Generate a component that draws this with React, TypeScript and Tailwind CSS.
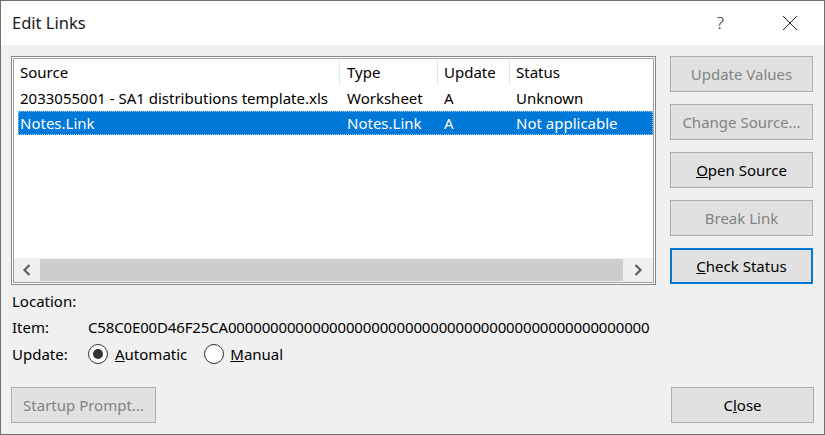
import React from "react";

const font = { fontFamily: '"Segoe UI", "Noto Sans", "Open Sans", sans-serif' };

function Btn({ children, disabled, focused, className = "" }: { children: React.ReactNode; disabled?: boolean; focused?: boolean; className?: string }) {
  return (
    <div
      className={
        "flex items-center justify-center bg-[#e1e1e1] text-[15px] " +
        (focused ? "border-2 border-[#0078d7] " : "border border-[#adadad] ") +
        (disabled ? "text-[#838383] " : "text-black ") +
        className
      }
    >
      {children}
    </div>
  );
}

function Radio({ checked }: { checked?: boolean }) {
  return (
    <div className="w-[20px] h-[20px] rounded-full border border-[#333333] bg-white flex items-center justify-center shrink-0">
      {checked && <div className="w-[10px] h-[10px] rounded-full bg-[#333333]" />}
    </div>
  );
}

export default function App() {
  const zeros = "0".repeat(50);
  return (
    <div className="w-[825px] h-[435px] bg-[#f0f0f0] border border-[#707070] flex flex-col overflow-hidden text-black" style={font}>
      {/* Title bar */}
      <div className="h-[44px] bg-white flex items-center shrink-0">
        <span className="ml-[11px] text-[16.5px] text-[#1a1a1a]">Edit Links</span>
        <span className="ml-auto mr-[58px] text-[17px] font-light text-[#222]">?</span>
        <svg width="16" height="16" viewBox="0 0 16 16" className="mr-[26px]">
          <path d="M1 1 L15 15 M15 1 L1 15" stroke="#222" strokeWidth="1" fill="none" />
        </svg>
      </div>

      {/* Body */}
      <div className="flex pl-[10px] pt-[11px]">
        <div className="w-[645px] flex flex-col">
          {/* list box */}
          <div className="h-[229px] border border-[#828790] bg-white p-[1px]">
            <div className="h-full border border-[#a0a0a0] flex flex-col">
              <div className="flex-1 bg-white flex flex-col text-[15px]">
                {/* header */}
                <div className="h-[27px] flex items-center pl-[4px]">
                  <div className="w-[321px] pl-[2px] h-full flex items-center">Source</div>
                  <div className="w-[98px] h-[25px] border-l border-[#e5e5e5] pl-[7px] flex items-center">Type</div>
                  <div className="w-[72px] h-[25px] border-l border-[#e5e5e5] pl-[6px] flex items-center">Update</div>
                  <div className="flex-1 h-[25px] border-l border-[#e5e5e5] pl-[6px] flex items-center">Status</div>
                </div>
                {/* row1 */}
                <div className="h-[25px] flex items-center pl-[4px]">
                  <div className="w-[321px] pl-[2px]">2033055001 - SA1 distributions template.xls</div>
                  <div className="w-[98px] pl-[8px]">Worksheet</div>
                  <div className="w-[72px] pl-[7px]">A</div>
                  <div className="flex-1 pl-[7px]">Unknown</div>
                </div>
                {/* row2 selected */}
                <div className="h-[24px] ml-[4px] flex items-center bg-[#0078d7] text-white border border-dotted border-[#9ccbf0]">
                  <div className="w-[320px] pl-[1px]">Notes.Link</div>
                  <div className="w-[98px] pl-[8px]">Notes.Link</div>
                  <div className="w-[72px] pl-[7px]">A</div>
                  <div className="flex-1 pl-[7px]">Not applicable</div>
                </div>
              </div>
              {/* scrollbar */}
              <div className="h-[24px] bg-[#f0f0f0] flex shrink-0">
                <div className="w-[26px] flex items-center justify-center">
                  <svg width="10" height="12" viewBox="0 0 10 12">
                    <path d="M7.5 1 L2.5 6 L7.5 11" stroke="#606060" strokeWidth="2.2" fill="none" />
                  </svg>
                </div>
                <div className="flex-1 bg-[#cdcdcd] my-[1px]" />
                <div className="w-[30px] flex items-center justify-center">
                  <svg width="10" height="12" viewBox="0 0 10 12">
                    <path d="M2.5 1 L7.5 6 L2.5 11" stroke="#606060" strokeWidth="2.2" fill="none" />
                  </svg>
                </div>
              </div>
            </div>
          </div>

          {/* info rows */}
          <div className="mt-[3px] pl-[1px] flex flex-col text-[15px]">
            <div className="h-[26px] flex items-center">Location:</div>
            <div className="h-[26px] flex items-center">
              <div className="w-[76px]">Item:</div>
              <div className="tracking-[-0.15px] whitespace-nowrap">C58C0E00D46F25CA{zeros}</div>
            </div>
            <div className="h-[28px] flex items-center">
              <div className="w-[76px]">Update:</div>
              <Radio checked />
              <span className="ml-[7px]"><u>A</u>utomatic</span>
              <div className="ml-[17px]"><Radio /></div>
              <span className="ml-[6px]"><u>M</u>anual</span>
            </div>
          </div>
        </div>

        {/* right buttons */}
        <div className="ml-[14px] w-[143px] flex flex-col gap-[12px]">
          <Btn disabled className="h-[36px]">Update Values</Btn>
          <Btn disabled className="h-[36px]">Change Source...</Btn>
          <Btn className="h-[36px]"><span><u>O</u>pen Source</span></Btn>
          <Btn disabled className="h-[36px]">Break Link</Btn>
          <Btn focused className="h-[36px]"><span><u>C</u>heck Status</span></Btn>
        </div>
      </div>

      {/* bottom */}
      <div className="mt-auto flex justify-between pl-[10px] pr-[10px] pb-[11px]">
        <Btn disabled className="w-[145px] h-[36px]">Startup Prompt...</Btn>
        <Btn className="w-[143px] h-[36px]"><span>C<u>l</u>ose</span></Btn>
      </div>
    </div>
  );
}
